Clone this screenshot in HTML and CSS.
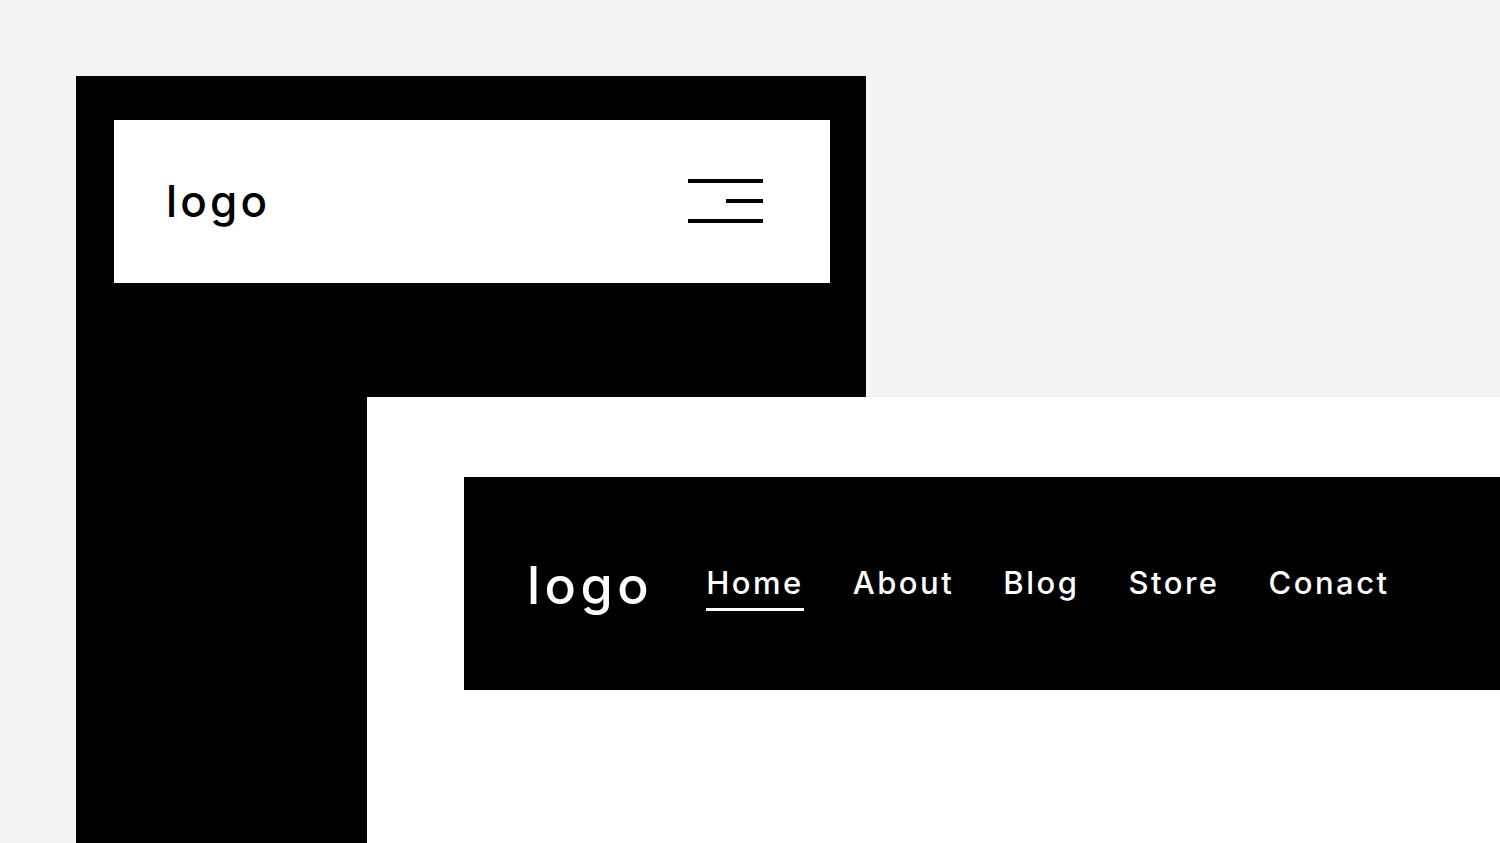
FILE: index.html
```html
<!DOCTYPE html>
<html lang="en">
<head>
<meta charset="utf-8">
<title>Navigation</title>
<link rel="stylesheet" href="styles.css">
</head>
<body>
<div class="stage">
  <section class="mobile">
    <header class="mobile-bar">
      <span class="mobile-logo">logo</span>
      <button class="burger" aria-label="Menu">
        <span class="line"></span>
        <span class="line short"></span>
        <span class="line"></span>
      </button>
    </header>
  </section>
  <section class="desktop">
    <header class="desktop-bar">
      <span class="desktop-logo">logo</span>
      <nav class="nav">
        <a class="nav-link active" href="#">Home</a>
        <a class="nav-link" href="#">About</a>
        <a class="nav-link" href="#">Blog</a>
        <a class="nav-link" href="#">Store</a>
        <a class="nav-link" href="#">Conact</a>
      </nav>
    </header>
  </section>
</div>
</body>
</html>
```

FILE: styles.css
```css
html, body {
  margin: 0;
  padding: 0;
}
body {
  background: #f3f3f3;
  width: 1500px;
  height: 843px;
  overflow: hidden;
  font-family: "Inter", "Liberation Sans", sans-serif;
}
.stage {
  position: relative;
  width: 1500px;
  height: 843px;
}
.mobile {
  position: absolute;
  left: 76px;
  top: 76px;
  width: 790px;
  height: 800px;
  background: #000;
  padding: 44px 36px 0 38px;
  box-sizing: border-box;
}
.mobile-bar {
  height: 163px;
  background: #fff;
  display: flex;
  align-items: center;
  justify-content: space-between;
  padding: 0 67px 0 52px;
}
.mobile-logo {
  font-size: 44px;
  font-weight: 500;
  letter-spacing: 3.2px;
  color: #000;
  line-height: 1;
  margin-bottom: 2px;
}
.burger {
  border: 0;
  background: none;
  padding: 0;
  width: 75px;
  display: flex;
  flex-direction: column;
  align-items: flex-end;
  gap: 16px;
  margin-top: -2px;
}
.line {
  display: block;
  width: 75px;
  height: 4px;
  background: #000;
}
.line.short {
  width: 37px;
}
.desktop {
  position: absolute;
  left: 367px;
  top: 397px;
  right: 0;
  bottom: 0;
  background: #fff;
  padding: 80px 0 0 97px;
}
.desktop-bar {
  height: 213px;
  box-sizing: border-box;
  background: #000;
  display: flex;
  align-items: center;
  padding: 0 0 3px 63px;
}
.desktop-logo {
  font-size: 52px;
  font-weight: 500;
  letter-spacing: 4.5px;
  color: #fff;
  line-height: 1;
  margin-right: 53px;
  margin-top: 8px;
}
.nav {
  display: flex;
  gap: 49px;
  align-items: center;
}
.nav-link {
  color: #fff;
  text-decoration: none;
  font-size: 31px;
  font-weight: 500;
  letter-spacing: 2.5px;
  line-height: 1;
  position: relative;
}
.nav-link.active::after {
  content: "";
  position: absolute;
  left: 0;
  right: 0;
  bottom: -13px;
  height: 3px;
  background: #fff;
}
```
